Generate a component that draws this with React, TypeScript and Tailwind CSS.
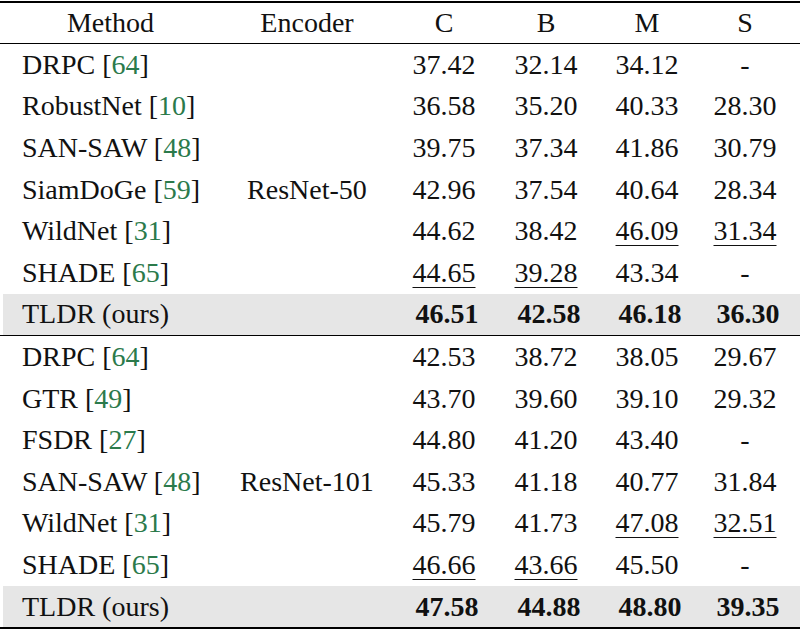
type Row = {
  name: string;
  cite?: string;
  encoder?: string;
  vals: string[];
  under?: number[];
  ours?: boolean;
};

const groups: Row[][] = [
  [
    {name: "DRPC", cite: "64", vals: ["37.42", "32.14", "34.12", "-"]},
    {name: "RobustNet", cite: "10", vals: ["36.58", "35.20", "40.33", "28.30"]},
    {name: "SAN-SAW", cite: "48", vals: ["39.75", "37.34", "41.86", "30.79"]},
    {name: "SiamDoGe", cite: "59", encoder: "ResNet-50", vals: ["42.96", "37.54", "40.64", "28.34"]},
    {name: "WildNet", cite: "31", vals: ["44.62", "38.42", "46.09", "31.34"], under: [2, 3]},
    {name: "SHADE", cite: "65", vals: ["44.65", "39.28", "43.34", "-"], under: [0, 1]},
    {name: "TLDR (ours)", vals: ["46.51", "42.58", "46.18", "36.30"], ours: true},
  ],
  [
    {name: "DRPC", cite: "64", vals: ["42.53", "38.72", "38.05", "29.67"]},
    {name: "GTR", cite: "49", vals: ["43.70", "39.60", "39.10", "29.32"]},
    {name: "FSDR", cite: "27", vals: ["44.80", "41.20", "43.40", "-"]},
    {name: "SAN-SAW", cite: "48", encoder: "ResNet-101", vals: ["45.33", "41.18", "40.77", "31.84"]},
    {name: "WildNet", cite: "31", vals: ["45.79", "41.73", "47.08", "32.51"], under: [2, 3]},
    {name: "SHADE", cite: "65", vals: ["46.66", "43.66", "45.50", "-"], under: [0, 1]},
    {name: "TLDR (ours)", vals: ["47.58", "44.88", "48.80", "39.35"], ours: true},
  ],
];

const cols = "grid grid-cols-[221px_172px_102px_102px_100px_96px] items-center";

function TableRow({row}: {row: Row}) {
  return (
    <div className={`${cols} h-[41.6px] ${row.ours ? "bg-[#e6e6e6] ml-[3px] pl-0" : ""}`}>
      <div className={row.ours ? "pl-[19px]" : "pl-[22px]"}>
        {row.name}
        {row.cite && (
          <>
            {" "}[<span className="text-[#2b7a4b]">{row.cite}</span>]
          </>
        )}
      </div>
      <div className="text-center">{row.encoder}</div>
      {row.vals.map((v, i) => (
        <div key={i} className={`text-center ${row.ours ? "font-bold" : ""}`}>
          <span className={row.under?.includes(i) ? "underline decoration-1 underline-offset-[5px]" : ""}>{v}</span>
        </div>
      ))}
    </div>
  );
}

export default function App() {
  return (
    <div className="w-[800px] h-[631px] bg-white pt-[1px] text-[28px] leading-none text-[#111] font-['Liberation_Serif',serif]">
      <div className="border-t-2 border-black">
        <div className={`${cols} h-[40px]`}>
          <div className="text-center">Method</div>
          <div className="text-center">Encoder</div>
          <div className="text-center">C</div>
          <div className="text-center">B</div>
          <div className="text-center">M</div>
          <div className="text-center">S</div>
        </div>
      </div>
      {groups.map((g, gi) => (
        <div key={gi} className="border-t border-black">
          {g.map((r, ri) => (
            <TableRow key={ri} row={r}/>
          ))}
        </div>
      ))}
      <div className="border-t-2 border-black"/>
    </div>
  );
}
